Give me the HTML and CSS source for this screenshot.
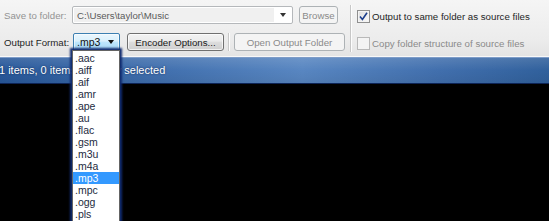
FILE: index.html
```html
<!DOCTYPE html>
<html>
<head>
<meta charset="utf-8">
<link rel="stylesheet" href="styles.css">
</head>
<body>
<div class="app">
  <div class="toolbar">
    <div class="left">
      <div class="row">
        <span class="label disabled">Save to folder:</span>
        <div class="combo combo-path">
          <span class="combo-text">C:\Users\taylor\Music</span>
          <span class="arrow dim"></span>
        </div>
        <div class="btn btn-dis btn-browse">Browse</div>
      </div>
      <div class="row">
        <span class="label">Output Format:</span>
        <div class="combo combo-fmt">
          <span class="combo-text">.mp3</span>
          <span class="arrow"></span>
        </div>
        <div class="btn btn-enc"><span>Encoder <u>O</u>ptions...</span></div>
        <div class="vsep short"></div>
        <div class="btn btn-dis btn-open">Open Output Folder</div>
      </div>
    </div>
    <div class="vsep tall"></div>
    <div class="right">
      <label class="check">
        <span class="box checked">
          <svg width="9" height="9" viewBox="0 0 9 9"><path d="M1 4.6 L3.4 7.4 L8 0.8" fill="none" stroke="#1c3e8c" stroke-width="1.6"/></svg>
        </span>
        <span class="check-text">Output to same folder as source files</span>
      </label>
      <label class="check">
        <span class="box dis"></span>
        <span class="check-text dim-text">Copy folder structure of source files</span>
      </label>
    </div>
  </div>
  <div class="status">1 items, 0 items currently selected</div>
  <div class="list-area"></div>

  <ul class="dropdown">
    <li>.aac</li>
    <li>.aiff</li>
    <li>.aif</li>
    <li>.amr</li>
    <li>.ape</li>
    <li>.au</li>
    <li>.flac</li>
    <li>.gsm</li>
    <li>.m3u</li>
    <li>.m4a</li>
    <li class="sel">.mp3</li>
    <li>.mpc</li>
    <li>.ogg</li>
    <li>.pls</li>
  </ul>
</div>
</body>
</html>
```

FILE: styles.css
```css
html, body {
  margin: 0;
  padding: 0;
  background: #000;
}
body {
  width: 549px;
  height: 221px;
  overflow: hidden;
  font-family: "Liberation Sans", Arial, sans-serif;
  font-size: 9.7px;
  color: #1f1f1f;
}
.app {
  position: relative;
  width: 549px;
  height: 221px;
  display: flex;
  flex-direction: column;
}
.toolbar {
  height: 57px;
  box-sizing: border-box;
  display: flex;
  padding-left: 4px;
  background: linear-gradient(#f5f5f5, #ececec 70%, #e4e4e4);
  border-bottom: 1px solid #f8f8f8;
}
.left {
  width: 342px;
  display: flex;
  flex-direction: column;
  gap: 9px;
  padding-top: 6px;
}
.row {
  display: flex;
  align-items: center;
  height: 18px;
}
.label {
  width: 68px;
  white-space: nowrap;
}
.disabled { color: #939393; }
.combo {
  height: 18px;
  box-sizing: border-box;
  display: flex;
  align-items: center;
  position: relative;
  border-radius: 2px;
}
.combo-path {
  width: 221px;
  border: 1px solid #b5b8bb;
  background: #fff;
}
.combo-path .combo-text {
  flex: 1;
  align-self: stretch;
  display: flex;
  align-items: center;
  background: #f0f0f0;
  margin: 1px 0 1px 1px;
  padding-left: 3px;
  color: #5b5b5b;
}
.combo-path .arrow { margin: 0 6px 0 6px; }
.combo-fmt {
  width: 47px;
  margin-left: 1px;
  border: 1px solid #3c7fb1;
  background: linear-gradient(#eaf6fd, #d9f0fc 45%, #bee6fd 50%, #a7d9f5);
  box-shadow: inset 0 0 0 1px rgba(255,255,255,0.6);
}
.combo-fmt .combo-text {
  flex: 1;
  padding-left: 3px;
  color: #111;
  font-size: 10.5px;
}
.combo-fmt .arrow { margin-right: 5px; }
.arrow {
  width: 0;
  height: 0;
  border-left: 3.5px solid transparent;
  border-right: 3.5px solid transparent;
  border-top: 4px solid #111;
}
.arrow.dim { border-top-color: #333; }
.btn {
  height: 18px;
  box-sizing: border-box;
  border-radius: 3px;
  display: flex;
  align-items: center;
  justify-content: center;
  white-space: nowrap;
}
.btn-dis {
  border: 1px solid #adb2b5;
  background: #f4f4f4;
  color: #8a8a8a;
}
.btn-browse { width: 39px; margin-left: 6px; }
.btn-enc {
  width: 97px;
  margin-left: 7px;
  border: 1px solid #707070;
  background: linear-gradient(#f2f2f2, #ebebeb 45%, #dddddd 50%, #cfcfcf);
  box-shadow: inset 0 0 0 1px rgba(255,255,255,0.7);
  color: #1a1a1a;
}
.btn-enc u { text-decoration: none; }
.btn-open { width: 111px; }
.vsep {
  width: 1px;
  background: #c7c7c7;
  border-right: 1px solid #fdfdfd;
}
.vsep.short { height: 18px; margin: 0 4px 0 4px; }
.vsep.tall { height: 47px; margin: 5px 5px 0 4px; }
.right {
  display: flex;
  flex-direction: column;
  padding-top: 10px;
  gap: 14px;
}
.check {
  display: flex;
  align-items: center;
  height: 13px;
  gap: 2px;
}
.box {
  width: 13px;
  height: 13px;
  box-sizing: border-box;
  border: 1px solid #8f8f8f;
  background: linear-gradient(135deg, #dcdcdc, #fbfbfb);
  box-shadow: inset 0 0 0 1px #f4f4f4;
  display: flex;
  align-items: center;
  justify-content: center;
}
.box.dis {
  border-color: #b9b9b9;
  background: #f4f4f4;
}
.check-text { white-space: nowrap; color: #1f1f1f; }
.dim-text { color: #8a8a8a; }
.status {
  height: 27px;
  box-sizing: border-box;
  line-height: 25px;
  font-size: 11px;
  color: #fff;
  white-space: nowrap;
  text-indent: -1px;
  text-shadow: 0 0 2px rgba(10,30,70,0.8);
  background:
    linear-gradient(rgba(255,255,255,0.12), rgba(255,255,255,0) 50%, rgba(0,0,0,0.06)),
    linear-gradient(90deg, #28589a, #3d6cab 25%, #5886c1 55%, #416fad 80%, #30609c);
  border-top: 1px solid #7d9cc8;
  border-bottom: 1px solid #0d2456;
}
.list-area {
  flex: 1;
  background: #000;
}
.dropdown {
  position: absolute;
  left: 72px;
  top: 50px;
  width: 48px;
  height: 180px;
  margin: 0;
  padding: 1px 0 0 0;
  box-sizing: border-box;
  list-style: none;
  background: #fff;
  border: 1px solid #646464;
  box-shadow: 0 0 2px 2px #102a6e;
}
.dropdown li {
  height: 12px;
  line-height: 12px;
  padding-left: 2px;
  font-size: 10.5px;
  color: #1d2b3e;
}
.dropdown li.sel {
  background: #3399ff;
  color: #fff;
}
```
